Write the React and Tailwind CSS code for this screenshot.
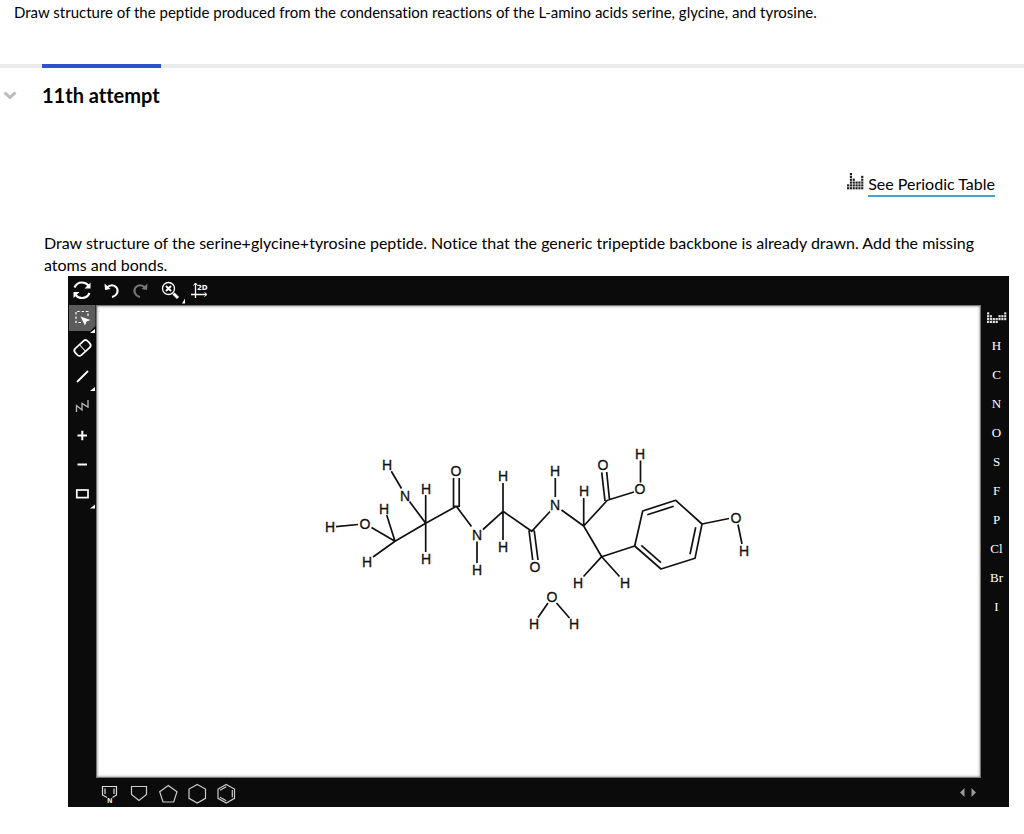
import React from "react";

const ATOMS = [
  ["H", 387, 465], ["N", 405, 496], ["H", 426, 489], ["H", 384, 509], ["O", 365, 524],
  ["H", 330, 527], ["H", 367, 562], ["H", 426, 559], ["O", 456, 471], ["N", 477, 535],
  ["H", 477, 570], ["H", 503, 476], ["H", 503, 547], ["O", 535, 567], ["N", 555, 505],
  ["H", 555, 471], ["H", 584, 491], ["O", 603, 465], ["O", 640, 489], ["H", 640, 454],
  ["H", 578, 583], ["H", 625, 583], ["O", 736, 518], ["H", 744, 551],
  ["O", 552, 597], ["H", 534, 624], ["H", 574, 624],
];

const BONDS =
  "M391.3 471.3 401.5 488.5M409.5 501.5 425.7 523.3M425.7 495V552M386.7 515 395 541.3M371.5 527.5 395 541.3M336 526.7 358 524.5M395 541.3 425.7 523.3 456.3 506.3 471.5 526.5M395 541.3 373 557" +
  "M453.5 478V506.3H459.2V478M477 541.5V563M483 529.5 503 511.3 531.7 531.3 550 511.5M503 483V540M529 530.5 532.7 560M534.2 530.5 538 560M529 530.5H534.2M555.3 478V497" +
  "M561.5 510 583.7 526 607.3 500.3 634 492M583.7 498V526L601.7 556.7 634.7 546M601.7 472.3 605 501M606.7 472 609.5 500M640.5 460.5V482.5M601.7 556.7 583.5 576.5M601.7 556.7 619.5 576.5" +
  "M634.7 546 642.7 511 675.7 500.3 702 524 695 558.3 661 569ZM647.3 514.7 673.7 506.3M695.7 527.3 690 554.3M641.3 545.3 661 562.7M702 524 729 518.5M738 524.5 742 544" +
  "M548 603 538 617.5M556.5 603 569.5 618";

function Molecule() {
  return (
    <svg viewBox="319 442 440 200" className="w-[440px] max-w-full" role="img" aria-label="Tripeptide and water">
      <path d={BONDS} fill="none" stroke="#111" strokeWidth="1.7" strokeLinejoin="round" />
      <g fill="#111" stroke="#111" strokeWidth="0.3" fontSize="14" textAnchor="middle" className="font-['Liberation_Sans',sans-serif]">
        {ATOMS.map(([label, x, y], i) => (
          <text key={i} x={x} y={y + 5}>{label}</text>
        ))}
      </g>
    </svg>
  );
}

function Tool({ label, children, active = false }) {
  return (
    <button type="button" aria-label={label} title={label} className="block size-[29px] shrink-0">
      <svg viewBox="0 0 29 29" className="block size-[29px] overflow-visible" fill="none" stroke="#fff" strokeWidth="1.5">
        {active && <path d="M1 0H27.500V21L22.500 26H1Z" fill="#5c5c5c" stroke="none" />}
        {children}
      </svg>
    </button>
  );
}

const Corner = ({ d }) => <path d={d} fill="#fff" stroke="none" />;

function Dots({ columns }) {
  return columns.map(([top, count], i) =>
    Array.from({ length: count }, (_, j) => (
      <rect key={`${i}-${j}`} x={i * 3} y={top + j * 3} width="2.3" height="2.3" />
    ))
  );
}

const ELEMENTS = ["H", "C", "N", "O", "S", "F", "P", "Cl", "Br", "I"];

function TopTools() {
  return (
    <div className="flex h-[29px]">
      <Tool label="Clear">
        <path d="M6.500 11.500C8 8 11 6.500 14 6.500c3 0 5 1.300 6.500 3M21.500 17C20 20.500 17 22 14 22c-3 0-5-1.300-6.500-3" strokeWidth="2.200" />
        <path d="M22.500 6.500V12.500H16.500ZM5.500 22V16H11.500Z" fill="#fff" stroke="none" />
      </Tool>
      <Tool label="Undo">
        <path d="M10 11.500C13 8.500 17 8.500 19.500 11.500c2.500 3.500.5 8.500-4.500 9.500" strokeWidth="2" />
        <path d="M7.500 7.500L13.500 13L8 14Z" fill="#fff" stroke="none" />
      </Tool>
      <Tool label="Redo">
        <path d="M19 11.500C16 8.500 12 8.500 9.500 11.500c-2.500 3.500-.5 8.500 4.500 9.500" stroke="#777" strokeWidth="2" />
        <path d="M21.500 7.500L15.500 13L21 14Z" fill="#777" stroke="none" />
      </Tool>
      <Tool label="Reset zoom">
        <circle cx="13.500" cy="12.500" r="6" strokeWidth="1.300" />
        <path d="M11 10l5 5M16 10l-5 5" strokeWidth="1.900" />
        <path d="M18.500 17.500l4.500 4.500" strokeWidth="3" />
        <Corner d="M30 22.500V27.500H27Z" />
      </Tool>
      <Tool label="Clean up in 2D">
        <path d="M11.500 7V22M7 18.500H22" strokeWidth="1.300" />
        <path d="M9.500 9.500l2-2.500 2 2.500M20.500 16.500l2.500 2-2.500 2" strokeWidth="1" />
        <text x="13" y="13.500" fontSize="7" fill="#fff" stroke="none" className="font-['DejaVu_Sans',sans-serif] font-bold">2D</text>
      </Tool>
    </div>
  );
}

function LeftTools() {
  return (
    <div className="flex w-[28px] flex-col">
      <Tool label="Select" active>
        <path d="M13 17.500H8V6.500H20V12" strokeWidth="1.200" strokeDasharray="2.500 1.800" />
        <path d="M12.500 11.500L22.500 15L18.500 16.500L17 20.500Z" fill="#fff" stroke="none" />
        <Corner d="M27 24V28H22Z" />
      </Tool>
      <Tool label="Erase">
        <g transform="rotate(-42 14.500 14)">
          <rect x="6" y="9.500" width="17" height="9" rx="3" strokeWidth="1.700" />
          <path d="M14.500 10V18" strokeWidth="1" />
        </g>
      </Tool>
      <Tool label="Single bond">
        <path d="M9 19L20 8" strokeWidth="1.800" />
        <Corner d="M27 24V28H22Z" />
      </Tool>
      <Tool label="Chain">
        <path d="M8.500 20V13.500L14 18V11.500L20 15V8" stroke="#bbb" strokeWidth="1.300" />
      </Tool>
      <Tool label="Increase charge"><path d="M9.500 14.500H19M14.300 9.700V19.300" strokeWidth="2" /></Tool>
      <Tool label="Decrease charge"><path d="M9.500 14.500H19" strokeWidth="2" /></Tool>
      <Tool label="Bracket">
        <rect x="8.800" y="11" width="11.200" height="7.600" strokeWidth="1.700" />
        <Corner d="M27 25.500V29.500H22Z" />
      </Tool>
    </div>
  );
}

function RightTools() {
  return (
    <div className="flex w-[28px] flex-col items-center pl-[3px]">
      <button type="button" aria-label="Periodic table" className="flex h-[26px] items-center justify-center">
        <svg viewBox="0 0 21 12" width="20" height="12" fill="#ddd"><Dots columns={[[0, 4], [3, 3], [6, 2], [6, 2], [3, 2], [3, 2], [0, 3]]} /></svg>
      </button>
      {ELEMENTS.map((el) => (
        <button key={el} type="button" className="h-[29px] font-['Liberation_Serif',serif] text-[13px] leading-[29px] text-white">
          {el}
        </button>
      ))}
    </div>
  );
}

function BottomTools() {
  return (
    <div className="flex h-[29px] items-center justify-between pr-8 pl-7">
      <div className="flex">
        <Tool label="Pyrrole ring">
          <g stroke="#ddd" strokeWidth="1.200">
            <path d="M11 19.500L6.500 17V8.500H20.500V17L16.500 19.500M9 10.500V16M18 10.500V16" />
          </g>
          <text x="13.700" y="25" fontSize="7" textAnchor="middle" fill="#fff" stroke="none" className="font-['Liberation_Sans',sans-serif] font-bold">N</text>
        </Tool>
        <Tool label="Cyclopentane, flat top"><path d="M6.500 8.500H21.500V16.500L14 22.500L6.500 16.500Z" stroke="#ccc" strokeWidth="1.200" /></Tool>
        <Tool label="Cyclopentane"><path d="M14.300 7.500L23 13.700L19.700 24H9L5.700 13.700Z" stroke="#ccc" strokeWidth="1.200" /></Tool>
        <Tool label="Cyclohexane"><path d="M14.300 6.500L22.500 11V20.300L14.300 25L6 20.300V11Z" stroke="#ccc" strokeWidth="1.200" /></Tool>
        <Tool label="Benzene">
          <path d="M14.300 6.500L22.500 11V20.300L14.300 25L6 20.300V11ZM8 12.200L14.300 8.800M20.300 12V19.300M14.300 22.700L8 19.200" stroke="#ccc" strokeWidth="1.200" />
        </Tool>
      </div>
      <div className="flex gap-1">
        <button type="button" aria-label="Previous templates">
          <svg viewBox="0 0 7 9" width="7" height="9"><path d="M5.500 0V9L1 4.500Z" fill="#999" /></svg>
        </button>
        <button type="button" aria-label="Next templates">
          <svg viewBox="0 0 7 9" width="7" height="9"><path d="M1.500 0V9L6 4.500Z" fill="#999" /></svg>
        </button>
      </div>
    </div>
  );
}

export default function App() {
  return (
    <main className="min-h-screen bg-white pb-7 font-['Lato',sans-serif] text-black [font-variant-ligatures:none]">
      <p className="px-3.5 pt-px text-[15px] leading-[22px]">
        Draw structure of the peptide produced from the condensation reactions of the L-amino acids serine, glycine, and tyrosine.
      </p>
      <div className="mt-[41px] h-1 bg-[#ebebeb] pl-[42px]">
        <div className="h-1 w-[119px] bg-[#3050c8]" />
      </div>
      <div className="mt-[13px] flex items-center">
        <button type="button" aria-label="Collapse attempt" className="flex w-[42px] pl-[3px]">
          <svg viewBox="0 0 14 9" width="14" height="9" fill="none" stroke="#bbb" strokeWidth="3"><path d="M1.500 1.500L7 6.500L12.500 1.500" /></svg>
        </button>
        <h1 className="text-[20px] leading-[28px] font-bold">11th attempt</h1>
      </div>
      <div className="mt-16 flex justify-end pr-[29px]">
        <a href="#periodic-table" className="flex items-start gap-1 text-[16px] leading-[22px]">
          <svg viewBox="0 0 18 18" width="17" height="17" fill="#222" aria-hidden="true"><Dots columns={[[12, 2], [0, 6], [6, 4], [9, 3], [9, 3], [3, 5]]} /></svg>
          <span className="border-b-2 border-[#45a5c8]">See Periodic Table</span>
        </a>
      </div>
      <p className="mt-[35px] pr-6 pl-11 text-[16px] leading-[22px]">
        Draw structure of the serine+glycine+tyrosine peptide. Notice that the generic tripeptide backbone is already drawn. Add the missing atoms and bonds.
      </p>
      <section aria-label="Structure editor" className="mr-[15px] ml-[68px] bg-[#0b0b0b]">
        <TopTools />
        <div className="flex min-h-[473px]">
          <LeftTools />
          <div className="flex min-w-0 flex-1 items-center justify-center border border-[#777] bg-white shadow-[inset_0_0_3px_#777]">
            <Molecule />
          </div>
          <RightTools />
        </div>
        <BottomTools />
      </section>
    </main>
  );
}
